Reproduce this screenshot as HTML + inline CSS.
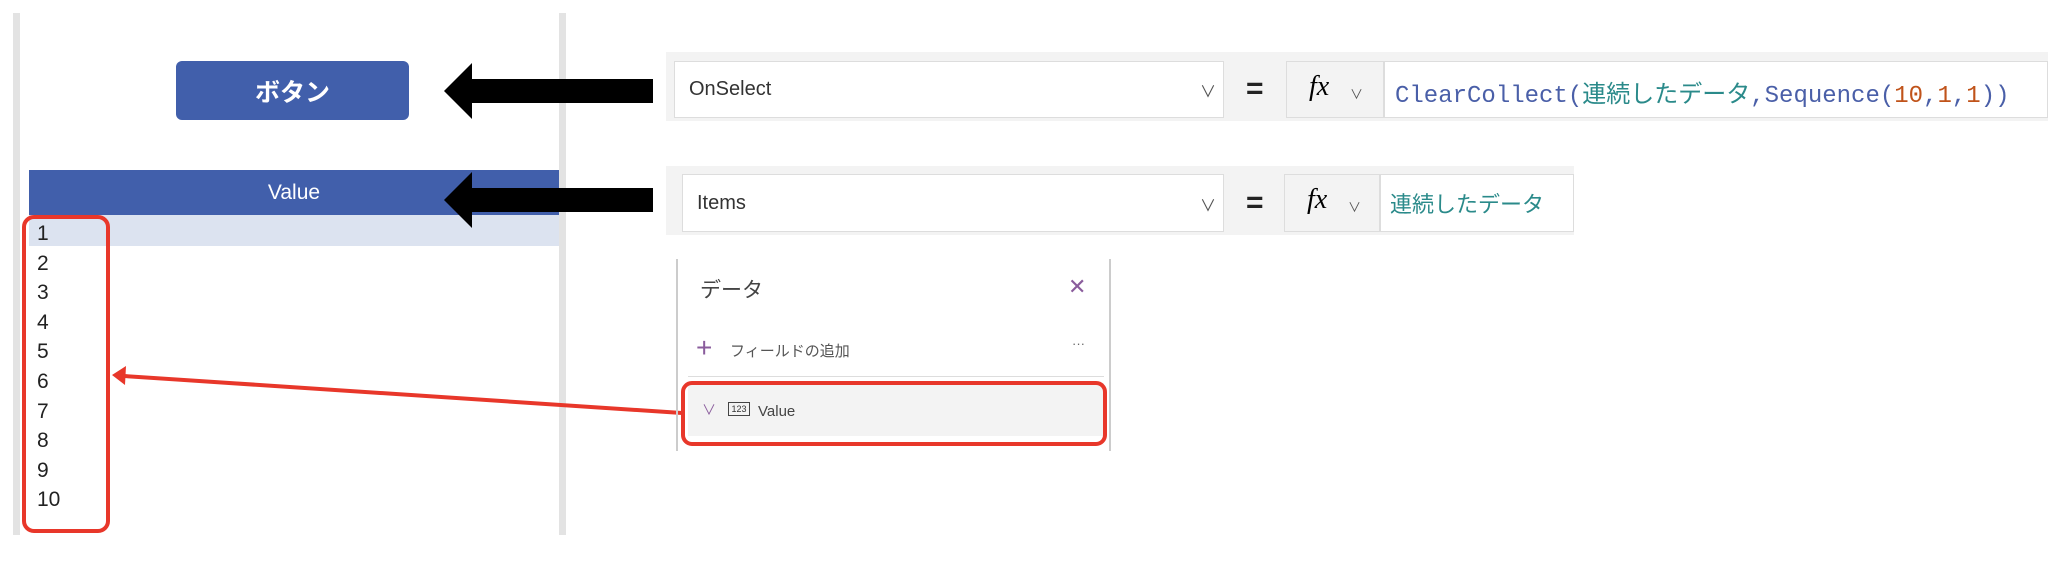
<!DOCTYPE html><html><head><meta charset="utf-8"><style>
body{margin:0;width:2048px;height:567px;background:#fff;position:relative;overflow:hidden;font-family:"Liberation Sans","Noto Sans CJK JP",sans-serif}
div{position:absolute;box-sizing:border-box}
.n{left:37px;font-size:21px;color:#222;line-height:29.6px}
.dd{background:#fff;border:1px solid #ddd;font-size:20px;color:#333;padding-left:14px;display:flex;align-items:center}
.mono{font-family:"Liberation Mono","Noto Sans CJK JP",monospace}
</style></head><body>
<div style="left:13px;top:13px;width:7px;height:522px;background:#e3e3e3"></div>
<div style="left:559px;top:13px;width:7px;height:522px;background:#e3e3e3"></div>
<div style="left:176px;top:61px;width:233px;height:59px;background:#415fab;border-radius:6px;color:#fff;font-size:25px;font-weight:bold;display:flex;align-items:center;justify-content:center">ボタン</div>
<div style="left:29px;top:170px;width:530px;height:45px;background:#415fab;color:#fff;font-size:21px;display:flex;align-items:center;justify-content:center">Value</div>
<div style="left:29px;top:215px;width:530px;height:31px;background:#dce3f0"></div>
<div class="n" style="top:219px">1<br>2<br>3<br>4<br>5<br>6<br>7<br>8<br>9<br>10</div>
<div style="left:22px;top:215px;width:88px;height:318px;border:4px solid #e8372a;border-radius:12px"></div>
<svg style="position:absolute;left:0;top:0" width="2048" height="567">
<polygon points="444,91 472,63 472,79 653,79 653,103 472,103 472,119" fill="#000"/>
<polygon points="444,200 472,172 472,188 653,188 653,212 472,212 472,228" fill="#000"/>
<line x1="682" y1="413" x2="124" y2="376" stroke="#e8372a" stroke-width="4"/>
<polygon points="112,375 126,366 125,385" fill="#e8372a"/>
</svg>
<div style="left:666px;top:52px;width:1382px;height:69px;background:#f3f3f3"></div>
<div class="dd" style="left:674px;top:61px;width:550px;height:57px">OnSelect</div>
<div style="left:1200px;top:78px;color:#555;font-size:16px">∨</div>
<div style="left:1246px;top:72px;font-size:30px;font-weight:bold;color:#222">=</div>
<div style="left:1286px;top:61px;width:98px;height:57px;border:1px solid #ddd;font-family:'Liberation Serif',serif;font-style:italic;font-size:28px;padding:9px 0 0 22px">fx</div>
<div style="left:1350px;top:84px;font-size:13px;color:#555">∨</div>
<div class="mono" style="left:1384px;top:61px;width:664px;height:57px;background:#fff;border:1px solid #ddd;font-size:24px;padding:12px 0 0 10px;color:#4a5fa8;white-space:nowrap">ClearCollect(<span style="color:#2a8a8a">連続したデータ</span>,Sequence(<span style="color:#c0531a">10</span>,<span style="color:#c0531a">1</span>,<span style="color:#c0531a">1</span>))</div>
<div style="left:666px;top:166px;width:908px;height:69px;background:#f3f3f3"></div>
<div class="dd" style="left:682px;top:174px;width:542px;height:58px">Items</div>
<div style="left:1200px;top:192px;color:#555;font-size:16px">∨</div>
<div style="left:1246px;top:186px;font-size:30px;font-weight:bold;color:#222">=</div>
<div style="left:1284px;top:174px;width:96px;height:58px;border:1px solid #ddd;font-family:'Liberation Serif',serif;font-style:italic;font-size:28px;padding:9px 0 0 22px">fx</div>
<div style="left:1348px;top:197px;font-size:13px;color:#555">∨</div>
<div style="left:1380px;top:174px;width:194px;height:58px;background:#fff;border:1px solid #ddd"></div>
<div style="left:1390px;top:187px;font-size:22px;color:#2a8a8a;white-space:nowrap">連続したデータ</div>
<div style="left:676px;top:259px;width:2px;height:192px;background:#ccc"></div>
<div style="left:1109px;top:259px;width:2px;height:192px;background:#ccc"></div>
<div style="left:700px;top:274px;font-size:21px;color:#444">データ</div>
<div style="left:1068px;top:274px;font-size:22px;color:#8a5c9c">✕</div>
<div style="left:696px;top:334px;font-size:28px;color:#8a5c9c;line-height:28px">+</div>
<div style="left:730px;top:340px;font-size:15px;color:#555">フィールドの追加</div>
<div style="left:1072px;top:336px;font-size:13px;color:#666">···</div>
<div style="left:688px;top:376px;width:416px;height:1px;background:#ddd"></div>
<div style="left:688px;top:383px;width:416px;height:53px;background:#f3f3f3"></div>
<div style="left:702px;top:400px;font-size:14px;color:#8a5c9c">∨</div>
<div style="left:728px;top:402px;width:22px;height:14px;border:1px solid #444;font-size:9px;line-height:12px;text-align:center;color:#333">123</div>
<div style="left:758px;top:403px;font-size:15px;color:#444">Value</div>
<div style="left:681px;top:381px;width:426px;height:65px;border:4px solid #e8372a;border-radius:11px"></div>
</body></html>
